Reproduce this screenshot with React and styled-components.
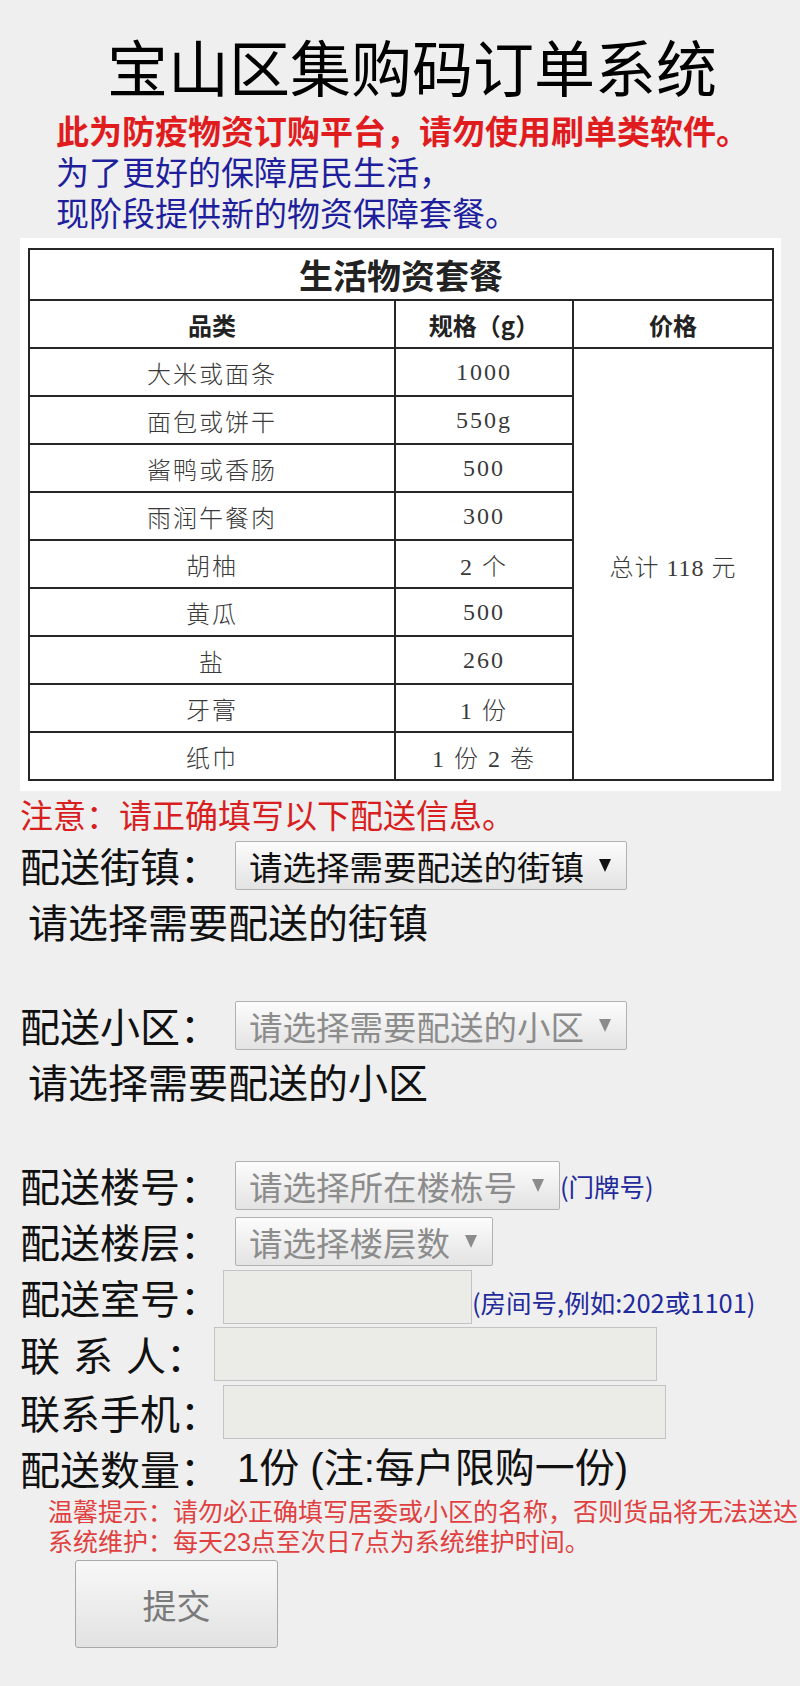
import React from "react";
import styled, { createGlobalStyle } from "styled-components";

const GlobalStyle = createGlobalStyle`
  html, body {
    margin: 0;
    padding: 0;
    background: #efefef;
    overflow-x: hidden;
  }
  body {
    font-family: "Noto Sans CJK SC", "Noto Sans", sans-serif;
    color: #111;
  }
`;

const compactStack = `"Liberation Sans", "Noto Sans CJK SC", sans-serif`;

const items = [
  ["大米或面条", "1000"],
  ["面包或饼干", "550g"],
  ["酱鸭或香肠", "500"],
  ["雨润午餐肉", "300"],
  ["胡柚", "2 个"],
  ["黄瓜", "500"],
  ["盐", "260"],
  ["牙膏", "1 份"],
  ["纸巾", "1 份 2 卷"],
];

const Page = styled.div`
  width: 800px;
  padding-top: 30px;
  padding-bottom: 40px;
  box-sizing: border-box;
`;

const Title = styled.h1`
  margin: 0;
  padding-left: 24px;
  text-align: center;
  font-size: 61px;
  line-height: 72px;
  font-weight: 400;
  color: #000;
`;

const Notice = styled.div`
  margin-top: 10px;
  padding-left: 56px;
  font-family: ${compactStack};
  font-size: 33px;
  line-height: 41px;
`;

const Warn = styled.div`
  color: #e01c1f;
  font-weight: 700;
`;

const Intro = styled.div`
  color: #1f1f9e;
`;

const TableCard = styled.div`
  margin: 3px 19px 0 20px;
  padding: 10px 7px 10px 8px;
  background: #fff;
`;

const PackTable = styled.table`
  width: 100%;
  border-collapse: collapse;
  border: 2px solid #262626;
  table-layout: fixed;

  td, th {
    border: 2px solid #262626;
    padding: 0;
    text-align: center;
  }
`;

const CaptionCell = styled.th`
  height: 46px;
  font-size: 34px;
  font-weight: 700;
  color: #222;
`;

const HeadCell = styled.th`
  height: 46px;
  font-size: 24px;
  font-weight: 700;
  color: #222;
`;

const DataCell = styled.td`
  height: 46px;
  font-family: "Liberation Serif", "Noto Sans CJK SC", serif;
  font-size: 24px;
  font-weight: 300;
  letter-spacing: 2px;
  color: #3a3a3a;
`;

const PriceCell = styled(DataCell)`
  vertical-align: middle;
  padding-top: 2px !important;
  letter-spacing: 1px;
`;

const Attention = styled.div`
  padding-left: 20px;
  font-size: 33px;
  line-height: 46px;
  color: #d81e1e;
`;

const FieldRow = styled.div`
  display: flex;
  align-items: center;
  height: ${({ $h }) => $h || 56}px;
  padding-left: 20px;
`;

const Label = styled.span`
  font-size: 40px;
  white-space: pre;
  color: #111;
  word-spacing: ${({ $spaced }) => ($spaced ? "4px" : "0")};
`;

const SelectBox = styled.div`
  display: inline-flex;
  align-items: center;
  box-sizing: border-box;
  height: 49px;
  margin-left: 15px;
  padding: 0 15px 0 13px;
  border: 1px solid #b2b2b2;
  border-radius: 2px;
  background: linear-gradient(#fcfcfc, #e3e3e3);
  font-size: 33.5px;
  color: ${({ $disabled }) => ($disabled ? "#8c8c8c" : "#111")};
  white-space: nowrap;
`;

const Arrow = styled.span`
  display: inline-block;
  margin-left: 15px;
  width: 0;
  height: 0;
  border-left: 6px solid transparent;
  border-right: 6px solid transparent;
  border-top: 13px solid ${({ $disabled }) => ($disabled ? "#8c8c8c" : "#111")};
`;

const TextInput = styled.input`
  box-sizing: border-box;
  width: ${({ $w }) => $w}px;
  height: 54px;
  margin-left: ${({ $gap }) => $gap}px;
  border: 1px solid #c3c3c3;
  background: #ebebe8;
  outline: none;
  font-size: 30px;
`;

const Hint = styled.span`
  font-size: 25.5px;
  color: #1f2a9c;
  white-space: nowrap;
  margin-top: ${({ $drop }) => $drop || 0}px;
`;

const Chosen = styled.div`
  height: 56px;
  line-height: 56px;
  padding-left: 28px;
  font-size: 40px;
  color: #111;
`;

const Spacer = styled.div`
  height: 48px;
`;

const Quantity = styled.span`
  margin-left: 17px;
  font-family: ${compactStack};
  font-size: 40px;
  line-height: 46px;
  color: #111;
  white-space: nowrap;
`;

const Tips = styled.div`
  padding-top: 2px;
  padding-left: 48px;
  font-family: ${compactStack};
  font-size: 25px;
  line-height: 30px;
  color: #e0403f;
  white-space: nowrap;
`;

const SubmitButton = styled.button`
  display: block;
  margin: 3px 0 0 75px;
  width: 203px;
  height: 88px;
  border: 1px solid #a9a9a9;
  border-radius: 3px;
  background: linear-gradient(#f8f8f8, #e2e2e2);
  font-family: inherit;
  font-size: 34px;
  color: #7a7a7a;
`;

const Dropdown = ({ children, disabled }) => (
  <SelectBox $disabled={disabled}>
    {children}
    <Arrow $disabled={disabled} />
  </SelectBox>
);

export default function App() {
  return (
    <>
      <GlobalStyle />
      <Page>
        <Title>宝山区集购码订单系统</Title>
        <Notice>
          <Warn>此为防疫物资订购平台，请勿使用刷单类软件。</Warn>
          <Intro>为了更好的保障居民生活，</Intro>
          <Intro>现阶段提供新的物资保障套餐。</Intro>
        </Notice>

        <TableCard>
          <PackTable>
            <colgroup>
              <col style={{ width: "366px" }} />
              <col style={{ width: "178px" }} />
              <col />
            </colgroup>
            <tbody>
              <tr>
                <CaptionCell colSpan={3}>生活物资套餐</CaptionCell>
              </tr>
              <tr>
                <HeadCell>品类</HeadCell>
                <HeadCell>规格（g）</HeadCell>
                <HeadCell>价格</HeadCell>
              </tr>
              {items.map(([name, spec], i) => (
                <tr key={name}>
                  <DataCell>{name}</DataCell>
                  <DataCell>{spec}</DataCell>
                  {i === 0 && (
                    <PriceCell rowSpan={items.length}>总计 118 元</PriceCell>
                  )}
                </tr>
              ))}
            </tbody>
          </PackTable>
        </TableCard>

        <Attention>注意：请正确填写以下配送信息。</Attention>

        <FieldRow>
          <Label>配送街镇：</Label>
          <Dropdown>请选择需要配送的街镇</Dropdown>
        </FieldRow>
        <Chosen>请选择需要配送的街镇</Chosen>
        <Spacer />

        <FieldRow>
          <Label>配送小区：</Label>
          <Dropdown disabled>请选择需要配送的小区</Dropdown>
        </FieldRow>
        <Chosen>请选择需要配送的小区</Chosen>
        <Spacer />

        <FieldRow>
          <Label>配送楼号：</Label>
          <Dropdown disabled>请选择所在楼栋号</Dropdown>
          <Hint>(门牌号)</Hint>
        </FieldRow>
        <FieldRow>
          <Label>配送楼层：</Label>
          <Dropdown disabled>请选择楼层数</Dropdown>
        </FieldRow>
        <FieldRow>
          <Label>配送室号：</Label>
          <TextInput $w={249} $gap={3} />
          <Hint $drop={8}>(房间号,例如:202或1101)</Hint>
        </FieldRow>
        <FieldRow $h={58}>
          <Label $spaced>联 系 人：</Label>
          <TextInput $w={443} $gap={8} />
        </FieldRow>
        <FieldRow $h={58}>
          <Label>联系手机：</Label>
          <TextInput $w={443} $gap={3} />
        </FieldRow>
        <FieldRow $h={54}>
          <Label>配送数量：</Label>
          <Quantity>1份 (注:每户限购一份)</Quantity>
        </FieldRow>

        <Tips>
          <div>温馨提示：请勿必正确填写居委或小区的名称，否则货品将无法送达</div>
          <div>系统维护：每天23点至次日7点为系统维护时间。</div>
        </Tips>

        <SubmitButton type="button">提交</SubmitButton>
      </Page>
    </>
  );
}
